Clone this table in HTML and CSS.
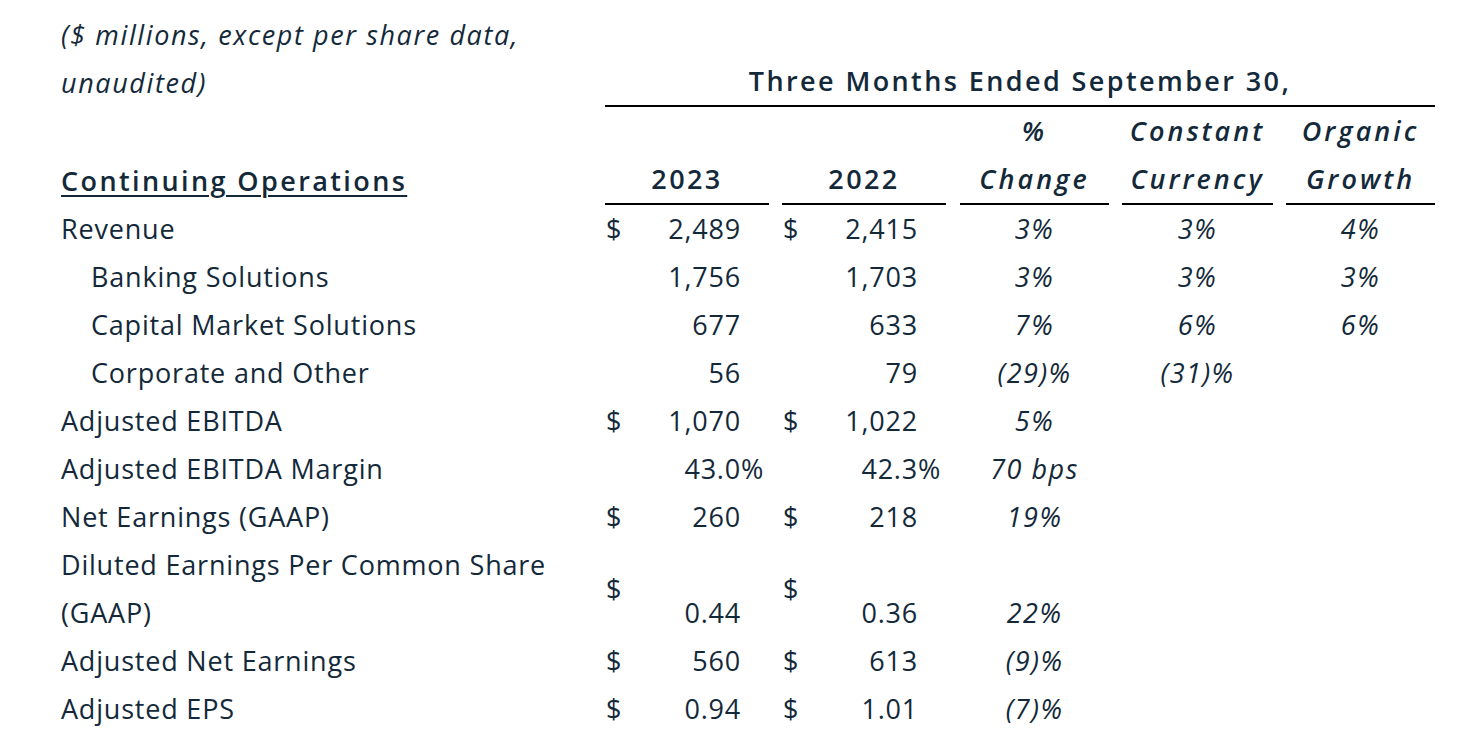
FILE: index.html
```html
<!DOCTYPE html>
<html lang="en">
<head>
<meta charset="utf-8">
<title>Three Months Ended September 30</title>
<link rel="stylesheet" href="styles.css">
</head>
<body>
<div class="page">
<table class="fin">
  <colgroup>
    <col class="c-label">
    <col class="c-dollar"><col class="c-num"><col class="c-suf">
    <col class="c-gap">
    <col class="c-dollar"><col class="c-num"><col class="c-suf">
    <col class="c-gap2">
    <col class="c-chg">
    <col class="c-gap">
    <col class="c-cc">
    <col class="c-gap">
    <col class="c-org">
  </colgroup>
  <thead>
    <tr class="hrow1">
      <td class="title">($ millions, except per share data, unaudited)</td>
      <th class="period" colspan="13">Three Months Ended September 30,</th>
    </tr>
    <tr class="hrow2">
      <th class="section"><span>Continuing Operations</span></th>
      <th class="colh" colspan="3">2023</th>
      <th></th>
      <th class="colh" colspan="3">2022</th>
      <th></th>
      <th class="colh it">%<br>Change</th>
      <th></th>
      <th class="colh it">Constant<br>Currency</th>
      <th></th>
      <th class="colh it">Organic<br>Growth</th>
    </tr>
  </thead>
  <tbody>
    <tr>
      <td class="label">Revenue</td>
      <td class="dol">$</td><td class="num">2,489</td><td class="suf"></td><td></td>
      <td class="dol">$</td><td class="num">2,415</td><td class="suf"></td><td></td>
      <td class="pct">3%</td><td></td><td class="pct">3%</td><td></td><td class="pct">4%</td>
    </tr>
    <tr>
      <td class="label sub">Banking Solutions</td>
      <td class="dol"></td><td class="num">1,756</td><td class="suf"></td><td></td>
      <td class="dol"></td><td class="num">1,703</td><td class="suf"></td><td></td>
      <td class="pct">3%</td><td></td><td class="pct">3%</td><td></td><td class="pct">3%</td>
    </tr>
    <tr>
      <td class="label sub">Capital Market Solutions</td>
      <td class="dol"></td><td class="num">677</td><td class="suf"></td><td></td>
      <td class="dol"></td><td class="num">633</td><td class="suf"></td><td></td>
      <td class="pct">7%</td><td></td><td class="pct">6%</td><td></td><td class="pct">6%</td>
    </tr>
    <tr>
      <td class="label sub">Corporate and Other</td>
      <td class="dol"></td><td class="num">56</td><td class="suf"></td><td></td>
      <td class="dol"></td><td class="num">79</td><td class="suf"></td><td></td>
      <td class="pct">(29)%</td><td></td><td class="pct">(31)%</td><td></td><td class="pct"></td>
    </tr>
    <tr>
      <td class="label">Adjusted EBITDA</td>
      <td class="dol">$</td><td class="num">1,070</td><td class="suf"></td><td></td>
      <td class="dol">$</td><td class="num">1,022</td><td class="suf"></td><td></td>
      <td class="pct">5%</td><td></td><td class="pct"></td><td></td><td class="pct"></td>
    </tr>
    <tr>
      <td class="label">Adjusted EBITDA Margin</td>
      <td class="dol"></td><td class="num">43.0</td><td class="suf">%</td><td></td>
      <td class="dol"></td><td class="num">42.3</td><td class="suf">%</td><td></td>
      <td class="pct">70 bps</td><td></td><td class="pct"></td><td></td><td class="pct"></td>
    </tr>
    <tr>
      <td class="label">Net Earnings (GAAP)</td>
      <td class="dol">$</td><td class="num">260</td><td class="suf"></td><td></td>
      <td class="dol">$</td><td class="num">218</td><td class="suf"></td><td></td>
      <td class="pct">19%</td><td></td><td class="pct"></td><td></td><td class="pct"></td>
    </tr>
    <tr class="tall">
      <td class="label">Diluted Earnings Per Common Share (GAAP)</td>
      <td class="dol mid">$</td><td class="num">0.44</td><td class="suf"></td><td></td>
      <td class="dol mid">$</td><td class="num">0.36</td><td class="suf"></td><td></td>
      <td class="pct">22%</td><td></td><td class="pct"></td><td></td><td class="pct"></td>
    </tr>
    <tr>
      <td class="label">Adjusted Net Earnings</td>
      <td class="dol">$</td><td class="num">560</td><td class="suf"></td><td></td>
      <td class="dol">$</td><td class="num">613</td><td class="suf"></td><td></td>
      <td class="pct">(9)%</td><td></td><td class="pct"></td><td></td><td class="pct"></td>
    </tr>
    <tr>
      <td class="label">Adjusted EPS</td>
      <td class="dol">$</td><td class="num">0.94</td><td class="suf"></td><td></td>
      <td class="dol">$</td><td class="num">1.01</td><td class="suf"></td><td></td>
      <td class="pct">(7)%</td><td></td><td class="pct"></td><td></td><td class="pct"></td>
    </tr>
  </tbody>
</table>
</div>
</body>
</html>
```

FILE: styles.css
```css
html, body {
  margin: 0;
  padding: 0;
  background: #ffffff;
}

.page {
  padding: 11px 0 0 61px;
  font-family: "Open Sans", "Noto Sans", sans-serif;
  font-size: 27px;
  letter-spacing: 0.8px;
  color: #13293a;
}

.fin {
  table-layout: fixed;
  width: 1374px;
  border-collapse: separate;
  border-spacing: 0;
}

.fin td, .fin th {
  padding: 0;
  line-height: 48px;
  font-weight: 400;
  white-space: nowrap;
}

.c-label { width: 544px; }
.c-dollar { width: 35px; }
.c-num { width: 101px; }
.c-suf { width: 28px; }
.c-gap { width: 13px; }
.c-gap2 { width: 14px; }
.c-chg { width: 149px; }
.c-cc { width: 151px; }
.c-org { width: 149px; }

.title {
  font-style: italic;
  letter-spacing: 1.6px;
  white-space: normal !important;
  vertical-align: top;
  padding-right: 40px !important;
}

.period {
  vertical-align: bottom;
  text-align: center;
  font-weight: 600 !important;
  letter-spacing: 2.4px;
  border-bottom: 2px solid #000;
}

.hrow2 th {
  vertical-align: bottom;
}

.section {
  text-align: left;
  font-weight: 600 !important;
  letter-spacing: 2.4px;
}

.section span {
  text-decoration: underline;
  text-decoration-thickness: 2px;
  text-underline-offset: 4px;
}

.colh {
  text-align: center;
  font-weight: 600 !important;
  letter-spacing: 2.4px;
  border-bottom: 2px solid #000;
}

.colh.it {
  font-style: italic;
  letter-spacing: 3px;
}

.label {
  text-align: left;
}

.label.sub {
  padding-left: 30px !important;
}

.tall .label {
  white-space: normal;
  padding-right: 24px !important;
}

.tall td {
  vertical-align: bottom;
}

.tall td.mid {
  vertical-align: middle;
}

.dol {
  text-align: left;
  padding-left: 1px !important;
}

.num {
  text-align: right;
}

.suf {
  text-align: left;
}

.pct {
  text-align: center;
  font-style: italic;
  letter-spacing: 1.5px;
}
```
